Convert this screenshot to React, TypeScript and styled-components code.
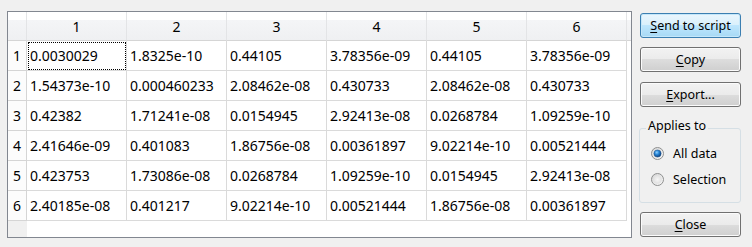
import React from "react";
import styled, { createGlobalStyle } from "styled-components";

const GlobalStyle = createGlobalStyle`
  html, body { margin: 0; padding: 0; background: #f0f0f0; }
  body { font-family: "Noto Sans", "Open Sans", sans-serif; color: #000; }
  * { box-sizing: border-box; }
`;

const data: string[][] = [
  ["0.0030029", "1.8325e-10", "0.44105", "3.78356e-09", "0.44105", "3.78356e-09"],
  ["1.54373e-10", "0.000460233", "2.08462e-08", "0.430733", "2.08462e-08", "0.430733"],
  ["0.42382", "1.71241e-08", "0.0154945", "2.92413e-08", "0.0268784", "1.09259e-10"],
  ["2.41646e-09", "0.401083", "1.86756e-08", "0.00361897", "9.02214e-10", "0.00521444"],
  ["0.423753", "1.73086e-08", "0.0268784", "1.09259e-10", "0.0154945", "2.92413e-08"],
  ["2.40185e-08", "0.401217", "9.02214e-10", "0.00521444", "1.86756e-08", "0.00361897"],
];

const Window = styled.div`
  display: flex;
  align-items: flex-start;
  gap: 8px;
  width: 752px;
  height: 247px;
  padding: 11px 0 0 7px;
`;

const Table = styled.div`
  display: grid;
  grid-template-columns: 19px repeat(6, 100px) 1fr;
  grid-template-rows: 29px repeat(6, 30px) 1fr;
  width: 625px;
  height: 227px;
  border: 1px solid #828790;
  background: #fff;
  font-size: 14px;
`;

const HeaderCell = styled.div<{ $last?: boolean }>`
  display: flex;
  align-items: center;
  justify-content: center;
  padding-top: 1px;
  background: linear-gradient(#ffffff 0, #ffffff 8px, #f4f5f7 8px, #eff0f2 100%);
  border-right: ${(p) => (p.$last ? "none" : "1px solid #e3e4e6")};
  border-bottom: 1px solid #d5d5d5;
`;

const RowHeader = styled.div`
  display: flex;
  align-items: center;
  justify-content: center;
  background: #fcfcfc;
  border-right: 1px solid #d5d5d5;
  border-bottom: 1px solid #d5d5d5;
`;

const Cell = styled.div<{ $focused?: boolean }>`
  position: relative;
  display: flex;
  align-items: center;
  padding-left: 3px;
  white-space: nowrap;
  border-right: 1px solid #dadada;
  border-bottom: 1px solid #dadada;
  &::after {
    content: "";
    display: ${(p) => (p.$focused ? "block" : "none")};
    position: absolute;
    left: 1px;
    top: 1px;
    right: 0;
    bottom: 0;
    border: 1px dotted #000;
  }
`;

const Filler = styled.div<{ $gray?: boolean; $span?: boolean }>`
  background: ${(p) => (p.$gray ? "#f0f0f0" : "#fff")};
  grid-column: ${(p) => (p.$span ? "2 / -1" : "auto")};
`;

const Panel = styled.div`
  display: flex;
  flex-direction: column;
  width: 101px;
  padding-top: 2px;
`;

const Button = styled.button<{ $primary?: boolean; $mt?: number }>`
  width: 101px;
  height: 25px;
  margin: ${(p) => p.$mt ?? 0}px 0 0 0;
  padding: 0;
  border-radius: 3px;
  font-family: "Noto Sans", "Open Sans", sans-serif;
  font-size: 12.5px;
  color: #000;
  border: 1px solid ${(p) => (p.$primary ? "#3c7fb1" : "#707070")};
  background: ${(p) =>
    p.$primary
      ? "linear-gradient(#eaf6fd 0%, #d9f0fc 50%, #bee6fd 50%, #a7d9f5 100%)"
      : "linear-gradient(#f2f2f2 0%, #ebebeb 50%, #dddddd 50%, #cfcfcf 100%)"};
  box-shadow: inset 0 0 0 1px ${(p) => (p.$primary ? "#c5e7fa" : "#fbfbfb")};
`;

const Key = styled.span`
  text-decoration: underline;
  text-underline-offset: 2px;
`;

const GroupBox = styled.fieldset`
  width: 102px;
  height: 83px;
  margin: 13px 0 0 -1px;
  padding: 4px 0 0 11px;
  border: 1px solid #d5dfe5;
  border-radius: 3px;
  min-inline-size: 0;
`;

const Legend = styled.legend`
  position: relative;
  top: -2px;
  margin-left: -5px;
  padding: 0 2px;
  font-size: 12.5px;
  line-height: 16px;
`;

const RadioRow = styled.label`
  display: flex;
  align-items: center;
  gap: 9px;
  height: 26px;
  font-size: 12.5px;
`;

const Radio: React.FC<{ checked?: boolean; id: string }> = ({ checked, id }) => (
  <svg width="13" height="13" viewBox="0 0 13 13">
    <defs>
      <linearGradient id={`${id}-ring`} x1="0" y1="0" x2="1" y2="1">
        <stop offset="0" stopColor="#d4d4d4" />
        <stop offset="1" stopColor="#fbfbfb" />
      </linearGradient>
      <radialGradient id={`${id}-in`} cx="0.5" cy="0.5" r="0.5">
        <stop offset="0" stopColor="#f6f6f6" />
        <stop offset="1" stopColor="#e0e0e0" />
      </radialGradient>
      <radialGradient id={`${id}-dot`} cx="0.4" cy="0.35" r="0.65">
        <stop offset="0" stopColor="#8fd0ff" />
        <stop offset="0.45" stopColor="#2a88d8" />
        <stop offset="1" stopColor="#0a3f80" />
      </radialGradient>
    </defs>
    <circle cx="6.5" cy="6.5" r="6" fill={`url(#${id}-ring)`} stroke="#8e8f8f" strokeWidth="1" />
    <circle cx="6.5" cy="6.5" r="4.3" fill={`url(#${id}-in)`} />
    {checked && <circle cx="6.5" cy="6.5" r="3.6" fill={`url(#${id}-dot)`} stroke="#1b4e86" strokeWidth="0.5" />}
  </svg>
);

export default function App() {
  return (
    <>
      <GlobalStyle />
      <Window>
        <Table>
          <HeaderCell />
          {[1, 2, 3, 4, 5, 6].map((n) => (
            <HeaderCell key={n}>{n}</HeaderCell>
          ))}
          <HeaderCell $last />
          {data.map((row, r) => (
            <React.Fragment key={r}>
              <RowHeader>{r + 1}</RowHeader>
              {row.map((v, c) => (
                <Cell key={c} $focused={r === 0 && c === 0}>
                  {v}
                </Cell>
              ))}
              <Filler />
            </React.Fragment>
          ))}
          <Filler $gray />
          <Filler $span />
        </Table>
        <Panel>
          <Button $primary>
            <Key>S</Key>end to script
          </Button>
          <Button $mt={9}>
            <Key>C</Key>opy
          </Button>
          <Button $mt={10}>
            <Key>E</Key>xport...
          </Button>
          <GroupBox>
            <Legend>Applies to</Legend>
            <RadioRow>
              <Radio checked id="r1" />
              All data
            </RadioRow>
            <RadioRow>
              <Radio id="r2" />
              Selection
            </RadioRow>
          </GroupBox>
          <Button $mt={9}>
            <Key>C</Key>lose
          </Button>
        </Panel>
      </Window>
    </>
  );
}
